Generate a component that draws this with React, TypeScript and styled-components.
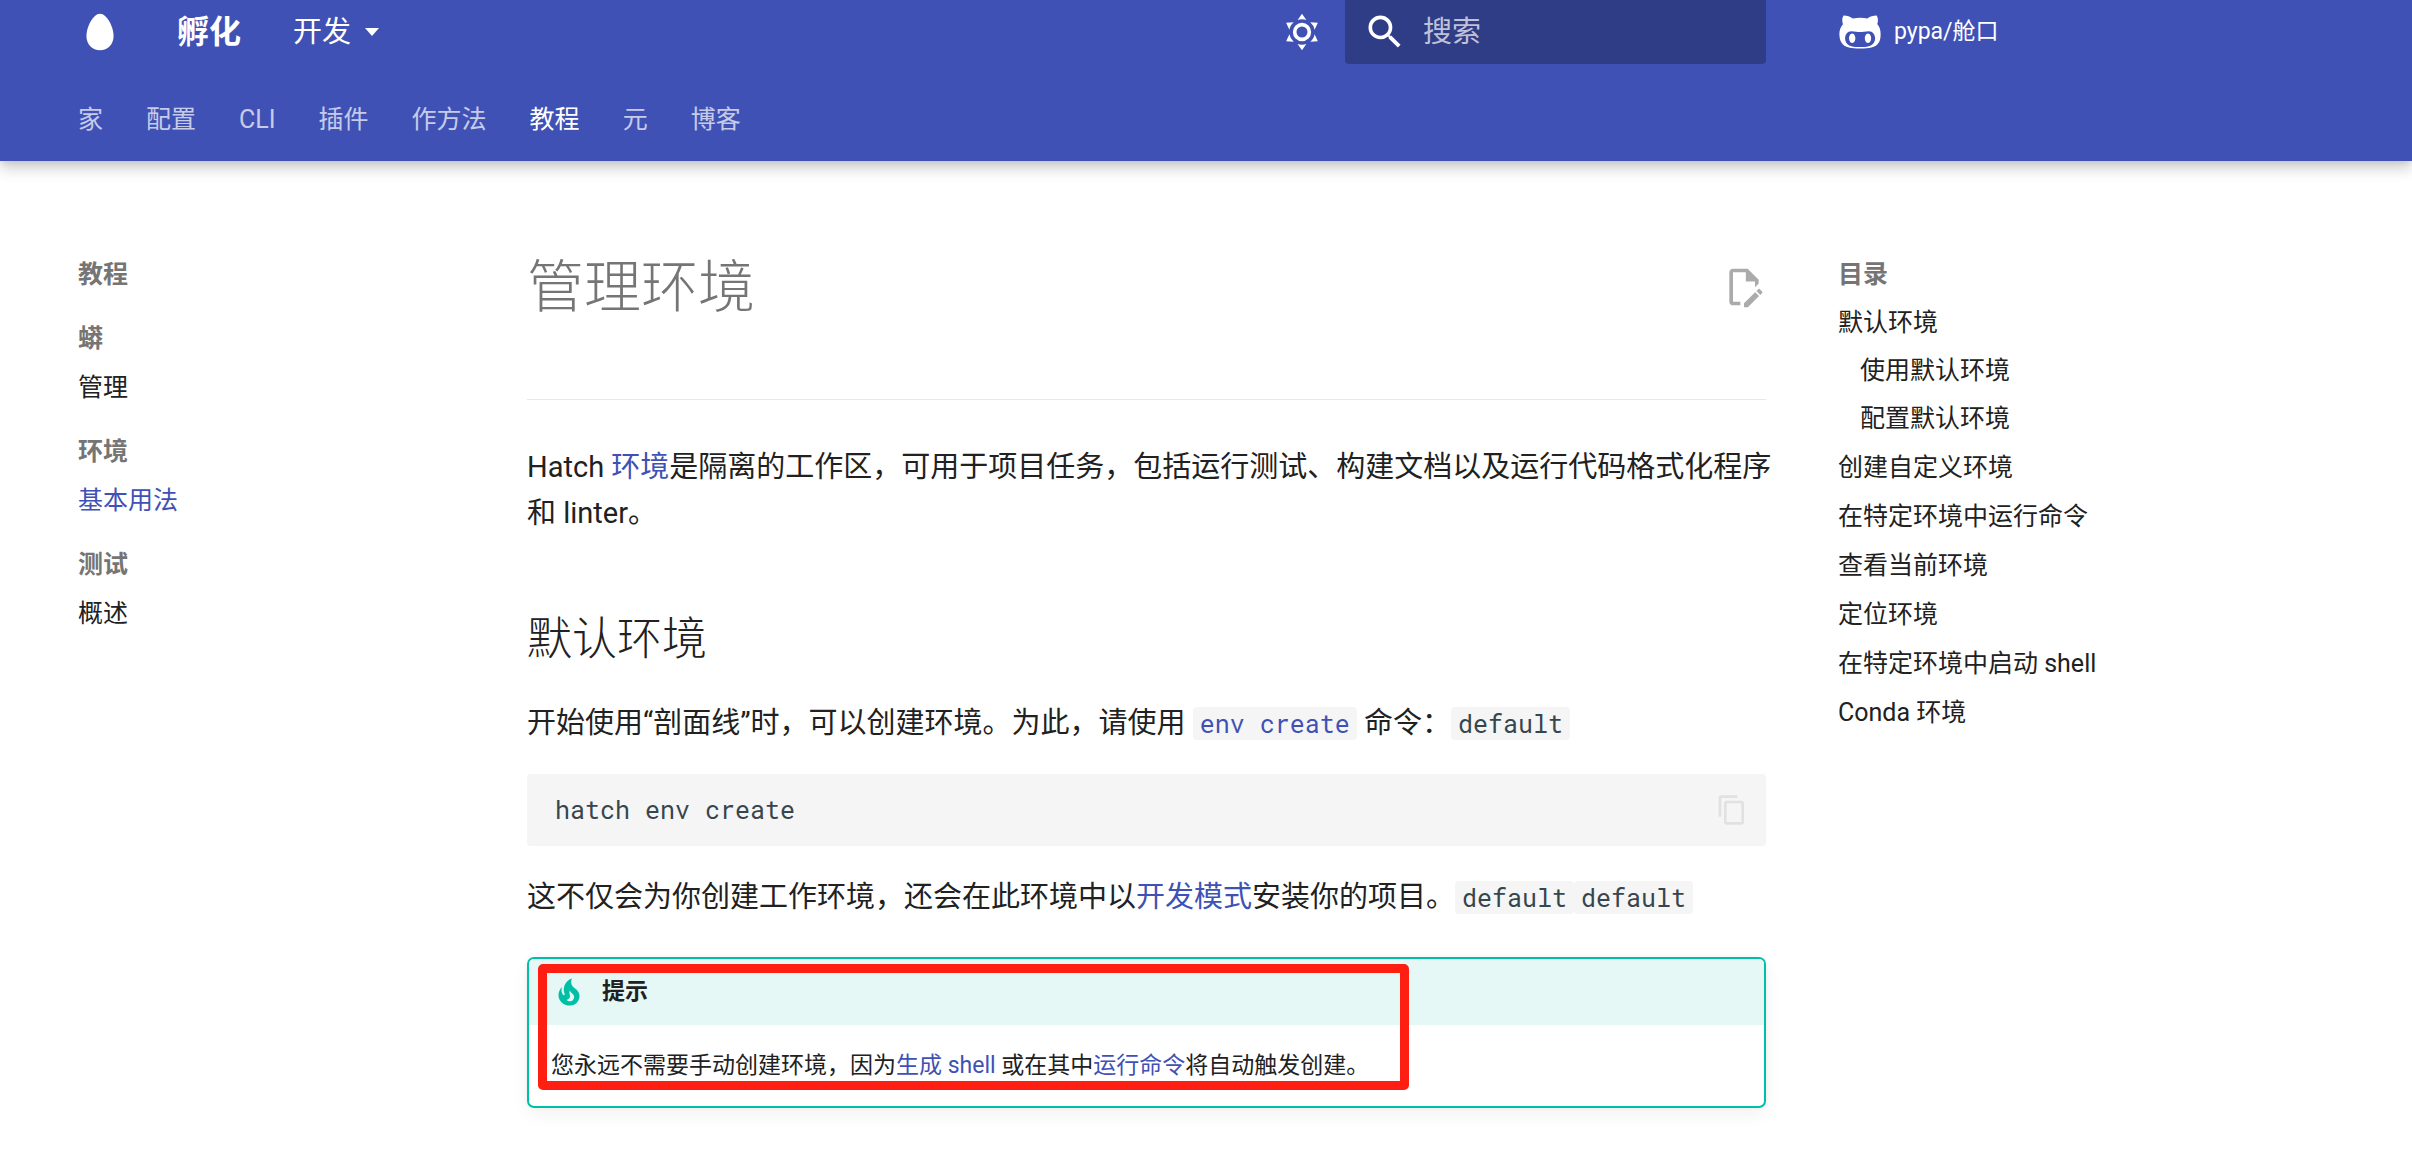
import React from 'react';
import styled, { createGlobalStyle } from 'styled-components';
import { FaGithubAlt } from 'react-icons/fa';

const color = {
  primary: '#4051b5',
  text: '#212121',
  muted: '#757575',
  codeBg: '#f5f5f5',
  code: '#36464e',
  tip: '#00bfa5',
};

const GlobalStyle = createGlobalStyle`
  *, *::before, *::after { box-sizing: border-box; }
  body {
    margin: 0;
    background: #fff;
    color: ${color.text};
    font-family: Roboto, "Noto Sans CJK SC", sans-serif;
    -webkit-font-smoothing: antialiased;
  }
  a { color: ${color.primary}; text-decoration: none; }
  ul { margin: 0; padding: 0; list-style: none; }
  button { border: 0; padding: 0; background: none; color: inherit; font: inherit; cursor: pointer; }
`;

const Icon = styled.svg<{ $size: number }>`
  display: block;
  flex: none;
  width: ${(p) => p.$size}px;
  height: ${(p) => p.$size}px;
  fill: currentColor;
`;

const Header = styled.header`
  position: relative;
  padding: 0 78px;
  background: ${color.primary};
  color: #fff;
  box-shadow: 0 0 7px rgba(0, 0, 0, 0.1), 0 7px 14px rgba(0, 0, 0, 0.2);
`;

const TopRow = styled.div`
  display: flex;
  align-items: center;
  height: 64px;
`;

const Logo = styled.a`
  color: #fff;
  margin-right: 55px;
`;

const SiteName = styled.span`
  margin-right: 52px;
  font-size: 32px;
  line-height: 40px;
  font-weight: 700;
`;

const VersionButton = styled.button`
  display: flex;
  align-items: center;
  gap: 14px;
  && {
    font-size: 29px;
    line-height: 42px;
  }
`;

const Caret = styled.span`
  border: 7px solid transparent;
  border-top: 8px solid #fff;
  border-bottom: 0;
`;

const ThemeButton = styled.button`
  margin-left: auto;
  margin-right: 21px;
`;

const SearchBox = styled.label`
  display: flex;
  align-items: center;
  gap: 16px;
  width: 421px;
  height: 64px;
  padding: 0 18px;
  border-radius: 0 0 4px 4px;
  background: rgba(0, 0, 0, 0.26);
`;

const SearchInput = styled.input`
  flex: 1;
  min-width: 0;
  padding: 0;
  border: 0;
  outline: 0;
  background: transparent;
  color: #fff;
  font: inherit;
  font-size: 29px;
  line-height: 40px;
  &::placeholder { color: rgba(255, 255, 255, 0.7); opacity: 1; }
`;

const SourceLink = styled.a`
  display: flex;
  align-items: center;
  gap: 12px;
  width: 496px;
  margin-left: 72px;
  color: #fff;
  font-size: 23px;
  line-height: 36px;
`;

const Tabs = styled.ul`
  display: flex;
  gap: 43px;
  padding: 40px 0 25px;
`;

const TabLink = styled.a<{ $active?: boolean }>`
  display: block;
  color: #fff;
  opacity: ${(p) => (p.$active ? 1 : 0.7)};
  font-size: 25px;
  line-height: 32px;
`;

const Layout = styled.div`
  display: grid;
  grid-template-columns: 377px minmax(0, 1fr) 496px;
  column-gap: 72px;
  padding: 88px 78px 40px;
`;

const Sidebar = styled.nav`
  padding-top: 9px;
  font-size: 25px;
  line-height: 33px;
`;

const NavSection = styled.section`
  margin-bottom: 31px;
`;

const NavTitle = styled.div`
  color: ${color.muted};
  font-weight: 700;
`;

const NavLink = styled.a<{ $active?: boolean }>`
  display: block;
  margin-top: 16px;
  color: ${(p) => (p.$active ? color.primary : color.text)};
`;

const TocList = styled.ul`
  display: flex;
  flex-direction: column;
  gap: 16px;
  padding-top: 15px;
`;

const TocSubList = styled.ul`
  padding-left: 22px;
  > li { padding-top: 15px; }
`;

const TocLink = styled.a`
  display: block;
  color: ${color.text};
`;

const ArticleHeader = styled.div`
  display: flex;
  justify-content: space-between;
  align-items: flex-start;
  height: 151px;
  margin-bottom: 44px;
  border-bottom: 1px solid #e8e8e8;
`;

const PageTitle = styled.h1`
  margin: 0;
  color: ${color.muted};
  font-size: 57px;
  line-height: 78px;
  font-weight: 300;
`;

const EditLink = styled.a`
  display: flex;
  align-items: center;
  height: 75px;
  color: #ababab;
`;

const SectionTitle = styled.h2`
  margin: 72px 0 29px;
  font-size: 45px;
  line-height: 63px;
  font-weight: 300;
`;

const Paragraph = styled.p`
  margin: 0 -8px 28px 0;
  font-size: 29px;
  line-height: 46px;
`;

const Code = styled.code`
  padding: 0 7px;
  border-radius: 4px;
  background: ${color.codeBg};
  color: ${(p) => (p.color ? p.color : color.code)};
  font-family: "Roboto Mono", "Noto Sans Mono", "DejaVu Sans Mono", monospace;
  font-size: 25px;
  line-height: 1;
`;

const CodeBlock = styled.div`
  display: flex;
  align-items: center;
  justify-content: space-between;
  height: 72px;
  margin-bottom: 28px;
  padding: 0 18px 0 28px;
  border-radius: 4px;
  background: ${color.codeBg};
`;

const Pre = styled.pre`
  margin: 0;
  color: ${color.code};
  font-family: "Roboto Mono", "Noto Sans Mono", "DejaVu Sans Mono", monospace;
  font-size: 25px;
  line-height: 36px;
`;

const CopyButton = styled.button`
  && { color: #e1e1e1; }
`;

const Tip = styled.aside`
  position: relative;
  margin-top: 37px;
  border: 2px solid ${color.tip};
  border-radius: 7px;
  box-shadow: 0 7px 18px rgba(0, 0, 0, 0.05), 0 0 4px rgba(0, 0, 0, 0.05);
  font-size: 23px;
  line-height: 36px;
`;

const TipTitle = styled.div`
  display: flex;
  align-items: center;
  gap: 15px;
  padding: 15px 22px;
  border-radius: 5px 5px 0 0;
  background: #e5f8f6;
  font-weight: 700;
  svg { color: ${color.tip}; }
`;

const TipText = styled.p`
  margin: 23px 22px 22px;
`;

const Highlight = styled.div`
  position: absolute;
  top: 5px;
  left: 9px;
  width: 871px;
  height: 126px;
  border: 9px solid #ff1e12;
  border-radius: 5px;
  pointer-events: none;
`;

const paths = {
  egg: 'M12 2C8.2 2 4.6 9.3 4.6 14.2 4.6 18.8 7.8 22 12 22s7.4-3.2 7.4-7.8C19.4 9.3 15.8 2 12 2Z',
  sun: 'M12 7a5 5 0 0 1 5 5 5 5 0 0 1-5 5 5 5 0 0 1-5-5 5 5 0 0 1 5-5m0 2a3 3 0 0 0-3 3 3 3 0 0 0 3 3 3 3 0 0 0 3-3 3 3 0 0 0-3-3m0-7 2.39 3.42C13.65 5.15 12.84 5 12 5c-.84 0-1.65.15-2.39.42L12 2M3.34 7l4.16-.35A7.2 7.2 0 0 0 5.94 8.5c-.44.74-.69 1.5-.83 2.29L3.34 7m.02 10 1.76-3.77a7.131 7.131 0 0 0 2.38 4.14L3.36 17M20.65 7l-1.77 3.79a7.023 7.023 0 0 0-2.38-4.15l4.15.36m-.01 10-4.14.36c.59-.51 1.12-1.14 1.54-1.86.42-.73.69-1.5.83-2.29L20.64 17M12 22l-2.41-3.44c.74.27 1.55.44 2.41.44.82 0 1.63-.17 2.37-.44L12 22Z',
  search: 'M9.5 3A6.5 6.5 0 0 1 16 9.5c0 1.61-.59 3.09-1.56 4.23l.27.27h.79l5 5-1.5 1.5-5-5v-.79l-.27-.27A6.516 6.516 0 0 1 9.5 16 6.5 6.5 0 0 1 3 9.5 6.5 6.5 0 0 1 9.5 3m0 2C7 5 5 7 5 9.5S7 14 9.5 14 14 12 14 9.5 12 5 9.5 5Z',
  edit: 'M10 20H6V4h7v5h5v3.1l2-2V8l-6-6H6c-1.1 0-2 .9-2 2v16c0 1.1.9 2 2 2h4v-2m10.2-7c.1 0 .3.1.4.2l1.3 1.3c.2.2.2.6 0 .8l-1 1-2.1-2.1 1-1c.1-.1.2-.2.4-.2m0 3.9L14.1 23H12v-2.1l6.1-6.1 2.1 2.1Z',
  copy: 'M19 21H8V7h11m0-2H8a2 2 0 0 0-2 2v14a2 2 0 0 0 2 2h11a2 2 0 0 0 2-2V7a2 2 0 0 0-2-2m-3-4H4a2 2 0 0 0-2 2v14h2V3h12V1Z',
  fire: 'M17.66 11.2c-.23-.3-.51-.56-.77-.82-.67-.6-1.43-1.03-2.07-1.66C13.33 7.26 13 4.85 13.95 3c-.95.23-1.78.75-2.49 1.32-2.59 2.08-3.61 5.75-2.39 8.9.04.1.08.2.08.33 0 .22-.15.42-.35.5-.23.1-.47.04-.66-.12a.58.58 0 0 1-.14-.17c-1.13-1.43-1.31-3.48-.55-5.12C5.78 10 4.87 12.3 5 14.47c.06.5.12 1 .29 1.5.14.6.41 1.2.71 1.73 1.08 1.73 2.95 2.97 4.96 3.22 2.14.27 4.43-.12 6.07-1.6 1.83-1.66 2.47-4.32 1.53-6.6l-.13-.26c-.21-.46-.77-1.26-.77-1.26m-3.16 6.3c-.28.24-.74.5-1.1.6-1.12.4-2.24-.16-2.9-.82 1.19-.28 1.9-1.16 2.11-2.05.17-.8-.15-1.46-.28-2.23-.12-.74-.1-1.37.17-2.06.19.38.39.76.63 1.06.77 1 1.98 1.44 2.24 2.8.04.14.06.28.06.43.03.82-.33 1.72-.93 2.27Z',
};

const Glyph = ({ name, size = 44 }: { name: keyof typeof paths; size?: number }) => (
  <Icon $size={size} viewBox="0 0 24 24" aria-hidden="true">
    <path d={paths[name]} />
  </Icon>
);

const tabs = ['家', '配置', 'CLI', '插件', '作方法', '教程', '元', '博客'];

const navSections = [
  { title: '教程', links: [] },
  { title: '蟒', links: ['管理'] },
  { title: '环境', links: ['基本用法'] },
  { title: '测试', links: ['概述'] },
];

const toc: { label: string; children?: string[] }[] = [
  { label: '默认环境', children: ['使用默认环境', '配置默认环境'] },
  { label: '创建自定义环境' },
  { label: '在特定环境中运行命令' },
  { label: '查看当前环境' },
  { label: '定位环境' },
  { label: '在特定环境中启动 shell' },
  { label: 'Conda 环境' },
];

export default function App() {
  return (
    <>
      <GlobalStyle />
      <Header>
        <TopRow>
          <Logo href="#" aria-label="孵化"><Glyph name="egg" /></Logo>
          <SiteName>孵化</SiteName>
          <VersionButton type="button">开发<Caret /></VersionButton>
          <ThemeButton type="button" aria-label="主题"><Glyph name="sun" /></ThemeButton>
          <SearchBox>
            <Glyph name="search" />
            <SearchInput type="text" placeholder="搜索" aria-label="搜索" />
          </SearchBox>
          <SourceLink href="#"><FaGithubAlt size={44} />pypa/舱口</SourceLink>
        </TopRow>
        <nav>
          <Tabs>
            {tabs.map((t) => (
              <li key={t}><TabLink href="#" $active={t === '教程'}>{t}</TabLink></li>
            ))}
          </Tabs>
        </nav>
      </Header>
      <Layout>
        <Sidebar>
          {navSections.map((s) => (
            <NavSection key={s.title}>
              <NavTitle>{s.title}</NavTitle>
              {s.links.map((l) => (
                <NavLink key={l} href="#" $active={l === '基本用法'}>{l}</NavLink>
              ))}
            </NavSection>
          ))}
        </Sidebar>
        <main>
          <ArticleHeader>
            <PageTitle>管理环境</PageTitle>
            <EditLink href="#" aria-label="编辑"><Glyph name="edit" /></EditLink>
          </ArticleHeader>
          <Paragraph>
            Hatch <a href="#">环境</a>是隔离的工作区，可用于项目任务，包括运行测试、构建文档以及运行代码格式化程序和 linter。
          </Paragraph>
          <SectionTitle>默认环境</SectionTitle>
          <Paragraph>
            开始使用“剖面线”时，可以创建环境。为此，请使用 <a href="#"><Code color={color.primary}>env create</Code></a> 命令：<Code>default</Code>
          </Paragraph>
          <CodeBlock>
            <Pre>hatch env create</Pre>
            <CopyButton type="button" aria-label="复制"><Glyph name="copy" size={32} /></CopyButton>
          </CodeBlock>
          <Paragraph>
            这不仅会为你创建工作环境，还会在此环境中以<a href="#">开发模式</a>安装你的项目。<Code>default</Code><Code>default</Code>
          </Paragraph>
          <Tip>
            <TipTitle><Glyph name="fire" size={36} />提示</TipTitle>
            <TipText>
              您永远不需要手动创建环境，因为<a href="#">生成 shell</a> 或在其中<a href="#">运行命令</a>将自动触发创建。
            </TipText>
            <Highlight />
          </Tip>
        </main>
        <Sidebar>
          <NavTitle>目录</NavTitle>
          <TocList>
            {toc.map((item) => (
              <li key={item.label}>
                <TocLink href="#">{item.label}</TocLink>
                {item.children && (
                  <TocSubList>
                    {item.children.map((c) => (
                      <li key={c}><TocLink href="#">{c}</TocLink></li>
                    ))}
                  </TocSubList>
                )}
              </li>
            ))}
          </TocList>
        </Sidebar>
      </Layout>
    </>
  );
}
